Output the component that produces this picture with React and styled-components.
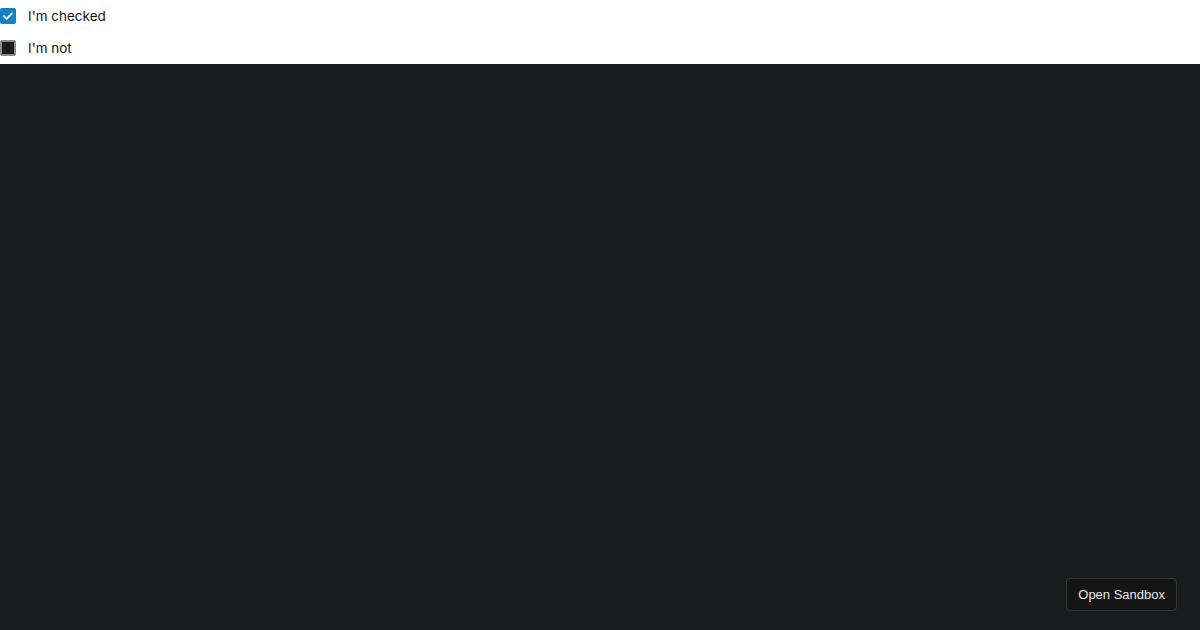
import React from "react";
import styled, { createGlobalStyle } from "styled-components";

const Global = createGlobalStyle`
  html, body { margin: 0; padding: 0; height: 100%; }
  body { background: #1a1c20; font-family: Inter, "Noto Sans", sans-serif; }
  #root { min-height: 100%; display: flex; flex-direction: column; }
`;

const Panel = styled.div`
  background: #ffffff;
  display: flex;
  flex-direction: column;
`;

const Row = styled.label`
  height: 32px;
  display: flex;
  align-items: center;
  gap: 12px;
  font-size: 13.5px;
  color: #111;
`;

const Box = styled.span`
  width: 16px;
  height: 16px;
  box-sizing: border-box;
  border-radius: 2px;
  display: flex;
  align-items: center;
  justify-content: center;
  background: ${(p) => (p.$checked ? "#1580c4" : "#1b1b1b")};
  border: ${(p) => (p.$checked ? "none" : "2px solid #8a8a8a")};
`;

const Stage = styled.div`
  flex: 1;
  background: #1a1c20;
  position: relative;
  height: 566px;
`;

const SandboxButton = styled.button`
  position: absolute;
  right: 23px;
  bottom: 19px;
  height: 33px;
  padding: 0 11px;
  background: #141414;
  color: #e6e6e6;
  border: 1px solid #353535;
  border-radius: 4px;
  font-family: "Liberation Sans", Arial, sans-serif;
  font-size: 13px;
`;

function Check({ checked, children }) {
  return (
    <Row>
      <Box $checked={checked}>
        {checked && (
          <svg width="12" height="12" viewBox="0 0 12 12">
            <path d="M2 6.2l2.6 2.6L10 3.4" fill="none" stroke="#fff" strokeWidth="1.8" strokeLinecap="round" strokeLinejoin="round" />
          </svg>
        )}
      </Box>
      {children}
    </Row>
  );
}

export default function App() {
  return (
    <>
      <Global />
      <Panel>
        <Check checked>I'm checked</Check>
        <Check>I'm not</Check>
      </Panel>
      <Stage>
        <SandboxButton>Open Sandbox</SandboxButton>
      </Stage>
    </>
  );
}
